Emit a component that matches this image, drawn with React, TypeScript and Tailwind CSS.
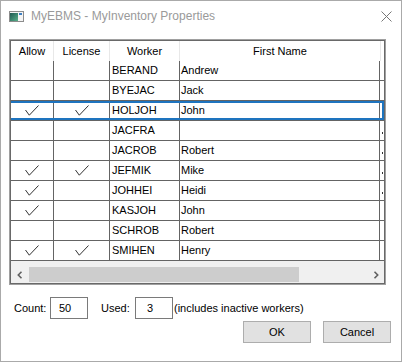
import React from 'react';

type Row = { allow: boolean; license: boolean; worker: string; first: string; dot?: boolean };

const rows: Row[] = [
  { allow: false, license: false, worker: 'BERAND', first: 'Andrew' },
  { allow: false, license: false, worker: 'BYEJAC', first: 'Jack' },
  { allow: true, license: true, worker: 'HOLJOH', first: 'John' },
  { allow: false, license: false, worker: 'JACFRA', first: '', dot: true },
  { allow: false, license: false, worker: 'JACROB', first: 'Robert', dot: true },
  { allow: true, license: true, worker: 'JEFMIK', first: 'Mike', dot: true },
  { allow: true, license: false, worker: 'JOHHEI', first: 'Heidi', dot: true },
  { allow: true, license: false, worker: 'KASJOH', first: 'John' },
  { allow: false, license: false, worker: 'SCHROB', first: 'Robert' },
  { allow: true, license: true, worker: 'SMIHEN', first: 'Henry' },
];

const Check = () => (
  <svg width="14" height="11" viewBox="0 0 14 11" className="block">
    <polyline points="0.5,5 4.3,10.2 13.5,0.5" fill="none" stroke="#1a1a1a" strokeWidth="0.9" />
  </svg>
);

const AppIcon = () => (
  <svg width="15" height="11" viewBox="0 0 15 11" className="block">
    <defs>
      <linearGradient id="g" x1="0" y1="0" x2="1" y2="1">
        <stop offset="0" stopColor="#1f5a52" />
        <stop offset="1" stopColor="#58b08a" />
      </linearGradient>
    </defs>
    <rect x="0" y="0" width="15" height="11" fill="#8c8c8c" />
    <rect x="1" y="1" width="13" height="9" fill="#f4f4f4" />
    <rect x="1" y="2" width="8" height="8" fill="url(#g)" />
    <rect x="10" y="2" width="3" height="2" fill="#3d7fc2" />
  </svg>
);

export default function App() {
  const font = { fontFamily: '"Liberation Sans", Arial, sans-serif' };
  return (
    <div className="w-[402px] h-[362px] bg-white border border-[#aaaaaa] flex flex-col text-[11px] text-black" style={font}>
      {/* title bar */}
      <div className="h-[30px] flex items-center pl-[8px] pr-[8px]">
        <AppIcon />
        <span className="ml-[7px] text-[12px] text-[#9a9a9a]">MyEBMS - MyInventory Properties</span>
        <div className="ml-auto mr-[1px]">
          <svg width="11" height="11" viewBox="0 0 11 11" className="block">
            <path d="M0.5 0.5 L10.5 10.5 M10.5 0.5 L0.5 10.5" stroke="#777" strokeWidth="1" />
          </svg>
        </div>
      </div>

      {/* grid */}
      <div className="ml-[8px] mt-[8px] w-[377px] h-[246px] border border-[#a0a0a0]">
        <div className="relative h-full border border-[#696969] flex flex-col overflow-hidden">
          <div className="h-[20px] flex shrink-0">
            <div className="w-[43px] border-r border-[#e8e8e8] flex items-center justify-center">Allow</div>
            <div className="w-[56px] border-r border-[#e8e8e8] flex items-center justify-center">License</div>
            <div className="w-[70px] border-r border-[#e8e8e8] flex items-center justify-center">Worker</div>
            <div className="w-[201px] border-r border-[#e8e8e8] flex items-center justify-center">First Name</div>
            <div className="flex-1" />
          </div>
          {rows.map((r) => (
            <div key={r.worker} className="h-[20px] flex shrink-0 border-b border-[#646464]">
              <div className="w-[43px] border-r border-[#646464] flex items-center justify-center">{r.allow && <Check />}</div>
              <div className="w-[56px] border-r border-[#646464] flex items-center justify-center">{r.license && <Check />}</div>
              <div className="w-[70px] border-r border-[#646464] flex items-center pl-[2px]">{r.worker}</div>
              <div className="w-[200px] border-r border-[#646464] flex items-center pl-[1px]">{r.first}</div>
              <div className="flex-1 flex items-center pl-[2px]">
                {r.dot && <div className="w-[1px] h-[2px] bg-[#333] mt-[5px]" />}
              </div>
            </div>
          ))}
          {/* focus rectangle */}
          <div className="absolute left-0 right-0 top-[60px] h-[19px] border-t-2 border-b-2 border-r-2 border-[#1e74bf]" />
          {/* horizontal scrollbar */}
          <div className="flex-1 bg-[#f0f0f0] flex pt-[6px]">
            <div className="w-[17px] h-[15px] flex items-center justify-center">
              <svg width="6" height="8" viewBox="0 0 6 8" className="block">
                <polyline points="4.5,0.8 1.3,4 4.5,7.2" fill="none" stroke="#606060" strokeWidth="1.6" />
              </svg>
            </div>
            <div className="ml-[1px] w-[270px] h-[15px] bg-[#cdcdcd]" />
            <div className="flex-1" />
            <div className="w-[17px] h-[15px] flex items-center justify-center">
              <svg width="6" height="8" viewBox="0 0 6 8" className="block">
                <polyline points="1.5,0.8 4.7,4 1.5,7.2" fill="none" stroke="#606060" strokeWidth="1.6" />
              </svg>
            </div>
          </div>
        </div>
      </div>

      {/* count row */}
      <div className="mt-[12px] flex items-center pl-[13px] h-[22px]">
        <span className="w-[36px]">Count:</span>
        <div className="w-[38px] h-[22px] border border-[#7a7a7a] flex items-center pl-[8px]">50</div>
        <span className="ml-[13px] w-[34px]">Used:</span>
        <div className="w-[38px] h-[22px] border border-[#7a7a7a] flex items-center pl-[11px]">3</div>
        <span className="ml-[1px]">(includes inactive workers)</span>
      </div>

      {/* buttons */}
      <div className="mt-[2px] flex justify-end gap-[12px] pr-[10px]">
        <button className="w-[68px] h-[22px] bg-[#e1e1e1] border border-[#adadad] flex items-center justify-center">OK</button>
        <button className="w-[68px] h-[22px] bg-[#e1e1e1] border border-[#adadad] flex items-center justify-center">Cancel</button>
      </div>
    </div>
  );
}
